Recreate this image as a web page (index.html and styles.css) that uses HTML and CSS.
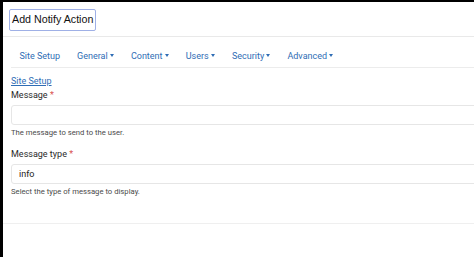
FILE: index.html
```html
<!DOCTYPE html>
<html>
<head>
<link rel="stylesheet" href="styles.css">
</head>
<body>

<div class="modal">
  <div class="modal-header">
    <h1 class="modal-title">Add Notify Action</h1>
  </div>

  <ul class="nav-tabs">
    <li><a href="#">Site Setup</a></li>
    <li><a href="#">General <span class="caret"></span></a></li>
    <li><a href="#">Content <span class="caret"></span></a></li>
    <li><a href="#">Users <span class="caret"></span></a></li>
    <li><a href="#">Security <span class="caret"></span></a></li>
    <li><a href="#">Advanced <span class="caret"></span></a></li>
  </ul>

  <div class="modal-body">
    <a class="crumb" href="#">Site Setup</a>

    <div class="field">
      <label class="field-label">Message <span class="required">*</span></label>
      <input class="field-input" type="text">
      <div class="field-help">The message to send to the user.</div>
    </div>

    <div class="field">
      <label class="field-label">Message type <span class="required">*</span></label>
      <div class="field-input select">info</div>
      <div class="field-help">Select the type of message to display.</div>
    </div>
  </div>
</div>

</body>
</html>
```

FILE: styles.css
```css
html, body {
  margin: 0;
  height: 100%;
  overflow: hidden;
  background-color: #000;
}

body {
  font-family: Roboto, "Liberation Sans", sans-serif;
  color: #222;
}

.modal {
  background-color: #fff;
  margin: 2px 0 0 3px;
  height: 255px;
  overflow: hidden; /* the dialog runs on past the right edge */
}

.modal-header {
  padding: 6px 6px 5px 6px;
  border-bottom: 1px solid #e9e9e9;
}

.modal-title {
  display: inline-block;
  margin: 0;
  font-family: "Liberation Sans", Arial, sans-serif;
  font-size: 10.7px;
  font-weight: normal;
  color: #111;
  padding: 3px 2px 4px 2px;
  border: 1px solid #9fb0e6;
  border-radius: 2px;
  line-height: 13px;
}

.nav-tabs {
  list-style: none;
  margin: 0 0 0 8px;
  padding: 13px 0 0 0;
  display: flex;
  border-bottom: 1px solid #ececec;
  height: 17px;
}

.nav-tabs li a {
  display: block;
  padding: 0 8.5px;
  font-size: 9px;
  line-height: 12px;
  color: #2f6db5;
  text-decoration: none;
}

.caret {
  display: inline-block;
  width: 0;
  height: 0;
  border-left: 2.5px solid transparent;
  border-right: 2.5px solid transparent;
  border-top: 3px solid #2f6db5;
  vertical-align: 2px;
}

.modal-body {
  padding: 7px 0 0 8px;
  height: 148px;
  border-bottom: 1px solid #efefef;
}

.crumb {
  display: block;
  font-size: 9px;
  color: #2f6db5;
  line-height: 12px;
}

.field {
  margin-top: 2px;
}

.field + .field {
  margin-top: 10px;
}

.field-label {
  display: block;
  font-size: 9px;
  color: #2a2a2a;
  line-height: 12px;
}

.required {
  color: #d9534f;
}

.field-input {
  display: block;
  box-sizing: border-box;
  width: calc(100% + 10px);
  height: 20px;
  margin: 4px 0 0 0;
  padding: 0;
  border: 1px solid #e6e6e6;
  border-radius: 3px;
  background: #fff;
}

.select {
  padding: 4px 0 0 7px;
  font-size: 9px;
  line-height: 11px;
  color: #222;
}

.field-help {
  font-size: 7.7px;
  color: #4a4a4a;
  margin-top: 3px;
  line-height: 10px;
}
```
